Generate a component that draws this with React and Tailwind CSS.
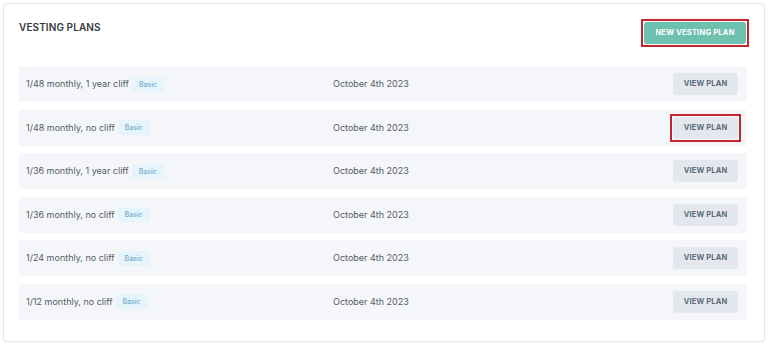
import React from 'react';

const plans = [
  { name: '1/48 monthly, 1 year cliff', date: 'October 4th 2023' },
  { name: '1/48 monthly, no cliff', date: 'October 4th 2023', marked: true },
  { name: '1/36 monthly, 1 year cliff', date: 'October 4th 2023' },
  { name: '1/36 monthly, no cliff', date: 'October 4th 2023' },
  { name: '1/24 monthly, no cliff', date: 'October 4th 2023' },
  { name: '1/12 monthly, no cliff', date: 'October 4th 2023' },
];

// square red box drawn over a button (annotation in the screenshot)
function Marker() {
  return <span className="pointer-events-none absolute -inset-[3px] border-2 border-[#c3262e]" />;
}

function PlanRow({ plan }) {
  return (
    <div className="grid h-9 grid-cols-[307px_1fr_auto] items-center rounded-[3px] bg-[#f4f6fa] pl-[7px] pr-[9px]">
      <div className="flex items-center gap-[3px]">
        <span className="text-[9px] text-[#555b63]">{plan.name}</span>
        <span className="rounded-[3px] bg-[#e6f4fb] px-[7px] py-[4px] text-[7px] font-medium leading-none text-[#74aecb]">
          Basic
        </span>
      </div>
      <span className="text-[9px] text-[#555b63]">{plan.date}</span>
      <button className="relative h-[22px] w-[65px] rounded-[3px] bg-[#e4e8ee] text-[7.5px] font-bold tracking-[0.02em] text-[#5d6b7b]">
        VIEW PLAN
        {plan.marked && <Marker />}
      </button>
    </div>
  );
}

export default function App() {
  return (
    <div className="h-[348px] w-[768px] bg-white p-[3px] font-['Inter',sans-serif]">
      <div className="h-[339px] w-[762px] rounded-[3px] border border-[#e6e7ea] bg-white pl-[15px] pr-[17px] pt-[15px] shadow-[0_1px_2px_rgba(0,0,0,0.04)]">
        <div className="flex items-start justify-between pr-[1px]">
          <h1 className="pt-[1px] text-[10px] font-semibold tracking-[0.01em] text-[#35393e]">VESTING PLANS</h1>
          <button className="relative mt-[3px] h-[22px] w-[102px] rounded-[3px] bg-[#6fc1af] text-[7.5px] font-bold tracking-[0.03em] text-white">
            NEW VESTING PLAN
            <Marker />
          </button>
        </div>
        <div className="mt-[22px] flex flex-col gap-[7.5px]">
          {plans.map((plan) => (
            <PlanRow key={plan.name} plan={plan} />
          ))}
        </div>
      </div>
    </div>
  );
}
